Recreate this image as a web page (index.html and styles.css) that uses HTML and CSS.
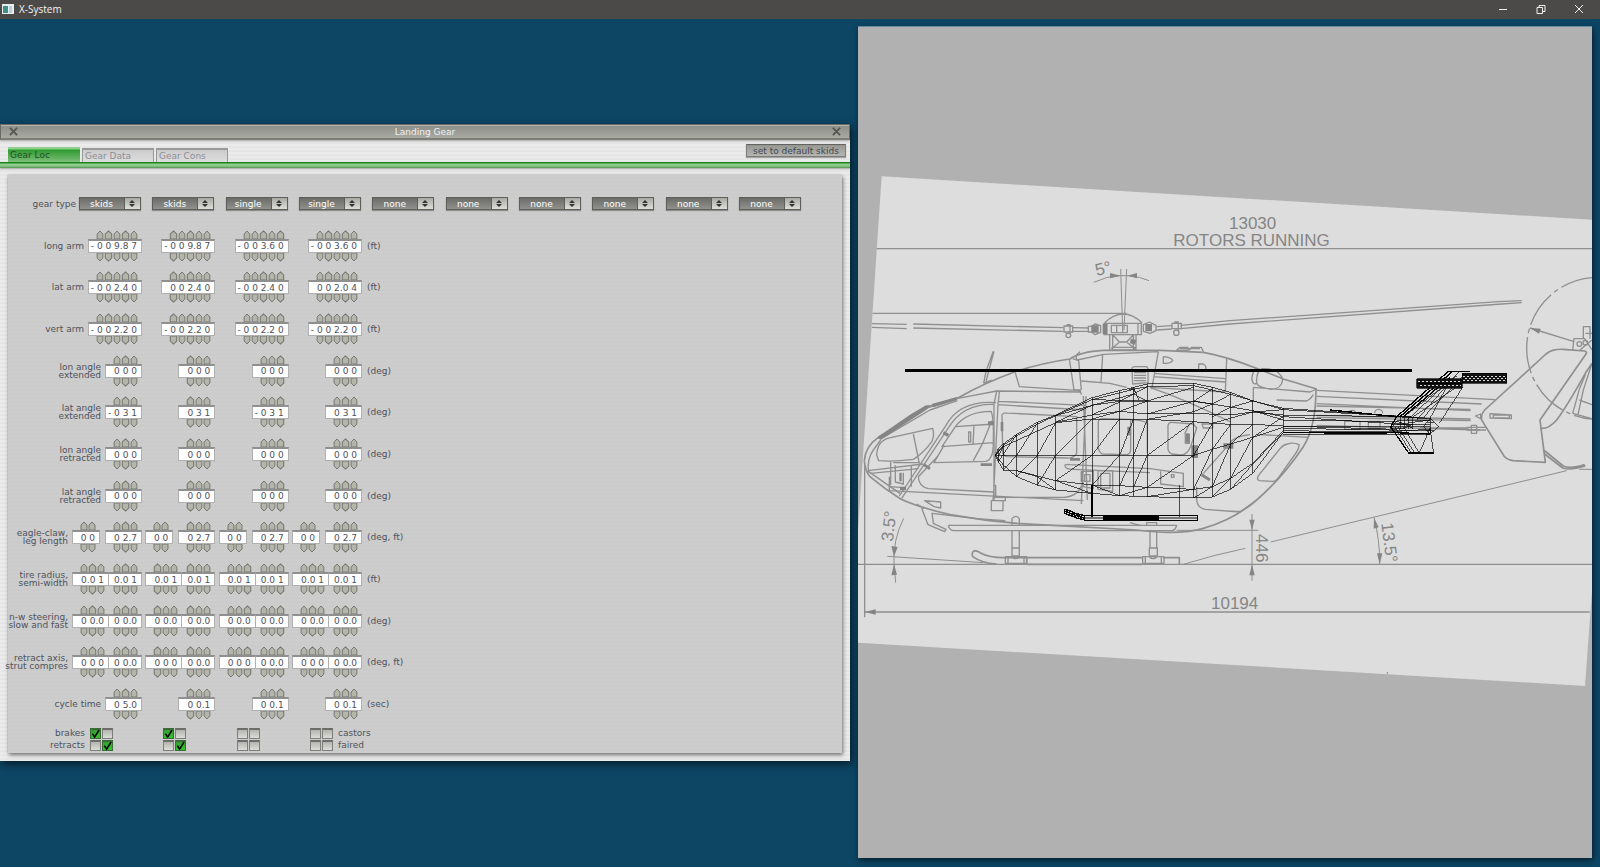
FILE: index.html
```html
<!DOCTYPE html>
<html lang="en">
<head>
    <meta charset="utf-8">
    <title>X-System</title>
    <link rel="stylesheet" href="styles.css">
</head>
<body>
    <header class="app-bar">
        <svg class="app-icon" viewBox="0 0 12 10"><rect width="12" height="10" fill="#e8eeee"/><rect x="1" y="2" width="5" height="7" fill="#3f8f86"/><rect x="7" y="2" width="3" height="7" fill="#b9cfd6"/></svg>
        <span class="app-name">X-System</span>
        <button class="app-btn" aria-label="Minimize"><svg viewBox="0 0 10 10"><path d="M1 5.5h8"/></svg></button>
        <button class="app-btn" aria-label="Restore"><svg viewBox="0 0 10 10"><path d="M1 3.5h5.5v6H1zM3 3.500V1.500h6v6H6.500"/></svg></button>
        <button class="app-btn" aria-label="Close"><svg viewBox="0 0 10 10"><path d="M1 1l8 8M9 1l-8 8"/></svg></button>
    </header>

    <main class="desktop">
        <section class="gear-window">
            <div class="window-title">
                <button class="window-close" aria-label="Close"><svg viewBox="0 0 10 10"><path d="M1 1l8 8M9 1l-8 8"/></svg></button>
                <h1>Landing Gear</h1>
                <button class="window-close" aria-label="Close"><svg viewBox="0 0 10 10"><path d="M1 1l8 8M9 1l-8 8"/></svg></button>
            </div>
            <div class="tab-bar">
                <button class="tab active">Gear Loc</button>
                <button class="tab">Gear Data</button>
                <button class="tab">Gear Cons</button>
                <button class="default-btn">set to default skids</button>
            </div>
            <div class="tab-line"></div>
            <form class="panel">
                <div class="row type-row" id="typeRow"></div>
                <div class="digit-rows" id="digitRows"></div>
                <div class="check-rows" id="checkRows"></div>
            </form>
        </section>

        <section class="view-window">
            <svg class="view" viewBox="24 -819 2202 2493" preserveAspectRatio="xMidYMid slice">
                <path d="M95 -371L2226 -241V873L2205 1158L24 1028V690z" fill="#dddddd"/>

                <!-- dimensions -->
                <g class="print">
                    <path d="M80 -154H2226M68 40H830M24 793H2226M44 500V952M44 936H2219"/>
                    <path class="thin" d="M812 -93L818 90M830 -93L822 90M731 -53Q770 -72 812 -73H835Q870 -70 897 -58"/>
                    <path class="thin" d="M112 769L400 788M161 655Q128 720 132 793L137 848M980 691H1225M1206 642V842M1000 793Q1090 765 1186 745M1262 726L2150 512M2188 508H2226M1572 653Q1590 720 1589 793M1612 1116V1122"/>
                    <path class="solid" d="M780 -81V-65L812 -73zM861 -81V-65L832 -73zM44 936L77 928V944zM124 738L143 741L132 770zM124 826L141 824L132 793zM1198 659H1214L1206 691zM1198 826H1214L1206 793zM1572 653L1586 682L1571 686zM1581 760H1597L1589 793z"/>
                    <circle cx="2243" cy="145" r="213" stroke-dasharray="110 12 14 12"/>
                    <path d="M2040 84L2170 124"/>
                    <path class="solid" d="M2040 84L2072 86L2067 101z"/>
                </g>
                <g class="print-text">
                    <text x="1137" y="-214">13030</text>
                    <text x="970" y="-162">ROTORS RUNNING</text>
                    <text x="1083" y="928">10194</text>
                    <text transform="translate(740 -72) rotate(-14)">5°</text>
                    <text transform="translate(128 726) rotate(-83)">3.5°</text>
                    <text transform="translate(1218 702) rotate(90)">446</text>
                    <text transform="translate(1594 670) rotate(83)">13.5°</text>
                </g>

                <!-- main rotor -->
                <g class="print">
                    <path d="M66 71L170 73M66 82L170 86M190 72L640 83M190 84L640 94M668 83L716 84M668 94L716 94M992 76L1140 62L1945 5L2015 2M992 86L1140 72L1955 12L2015 8M920 80L965 77M920 90L965 87"/>
                    <path d="M764 68Q820 16 876 68M715 79H725L735 72L752 77V97L735 104L725 96H715zM762 70H874V104H762zM880 74L898 66L918 76V92L900 100L880 94zM770 70V104M864 70V104M784 76H832V98H784zM800 76V98M818 76V98M779 104V150M788 104V150M850 104V150M858 104V150M790 106L808 126H830L848 106M792 140L806 128M848 140L832 128M786 142H854V150H786z"/>
                    <path d="M642 78H668V96H642zM650 74H660V100M966 70H994V86H966zM973 66H985V96"/>
                    <circle cx="655" cy="106" r="7"/><circle cx="979" cy="98" r="8"/>
                    <path class="solid" d="M724 76h22v22h-22zM886 72h20v22h-20zM758 72h14v30h-14zM842 116l18 4-6 14-14-4z"/>
                </g>

                <!-- fuselage outline -->
                <g class="print">
                    <path class="bold" d="M43 482C45 452 62 428 85 412L235 322L325 293Q400 250 495 215Q580 188 660 177Q690 155 760 151H930L1060 157Q1130 170 1215 203L1300 237L1400 267"/>
                    <path class="bold" d="M43 482Q45 512 60 530Q105 568 152 597Q200 620 300 644Q400 662 500 670L860 690Q990 706 1060 685Q1150 660 1220 600Q1300 530 1360 440Q1398 380 1398 267"/>
                    <path d="M85 415L118 398L240 318L320 296M100 412L240 330L322 302M92 420L70 450Q50 478 56 515L150 580"/>
                    <path class="solid" d="M82 412L180 344L228 316H242L228 330L130 394L92 420zM245 312L318 292L322 300L250 322z"/>
                    <path d="M320 296L440 273L690 276M495 215L508 260L690 272M658 177L672 270H690L694 284M668 176L686 182L694 270M694 243L780 250L830 262M690 155Q672 168 682 180L760 163L925 155M758 163L753 248M925 155L905 268M1130 176L1126 276L900 262M912 220L1126 236M910 230L1126 246M401 250L408 214L430 154M408 245L416 214L432 154M401 250L425 240"/>
                    <path d="M440 273L432 313M448 276L444 314M432 313Q340 310 296 382L155 595M438 308Q330 300 288 376L148 588M444 314L706 330M444 304L706 316M700 288L712 600M708 288L694 612M432 313V600M444 314L430 600"/>
                    <path d="M80 465Q82 420 122 413L248 385Q254 405 246 424Q220 460 190 478Q130 486 86 482zM190 402L208 490"/>
                    <path d="M276 440L316 380Q350 334 424 334Q432 360 430 428zM316 380L432 372M372 376L369 432M356 396H362V426H356zM425 362L398 430L370 482M282 436L252 488L408 484Q430 478 430 428"/>
                    <path class="solid" d="M282 394l16 8-6 8-14-8zM222 490l20 12-4 8-18-12zM414 364h18v12h-18zM392 490h34v8h-34z"/>
                    <path d="M456 344Q460 338 470 339L680 350V460Q670 476 650 474L470 470Q456 464 458 450zM62 520L205 506M54 512L220 492M122 486V556M130 488H210M136 496V546L160 552V518M184 494V560M118 560L150 562"/>
                    <path class="solid" d="M148 518h7v26h-7zM150 560h18v10h-18zM452 366h8v28h-8zM660 474h30v8h-30zM692 516h8v30h-8z"/>
                    <path d="M205 530Q206 560 236 566L430 576M205 530L262 470M118 530V572L700 602M430 600V592L640 592Q690 590 700 540M430 556H437V592H466V602H424V632H459V604M224 602L272 606V624L252 620zM694 514H730V566L700 560zM744 512H788V574L744 568zM752 520H780V564H752zM704 524H720V544H704z"/>
                    <path d="M745 364Q747 356 758 356L842 358V450Q842 464 826 464L756 462Q744 452 745 440zM842 358Q890 362 892 372V460M954 376Q956 366 966 367L1030 372L1040 384L1022 440Q1010 466 990 465L965 462Q952 456 954 440zM1004 402L1018 372M1006 402V430H1018V402M1056 372H1088V384H1060z"/>
                    <path class="solid" d="M1024 436h20v38h-20zM1120 430h30v16h-30zM1056 520l26 16-4 8-26-16zM832 380h10v26h-10zM1008 400h10v28h-10z"/>
                    <path d="M646 500Q640 492 660 494L900 506L1000 520V560L932 552V514M964 524H972V532H964zM646 500Q648 508 670 508L900 518M1060 520L1140 430Q1150 410 1200 404M1040 560V600Q1042 624 1066 628L1170 636L1210 608M900 262Q1010 300 1142 366"/>
                    <path d="M846 204Q848 200 856 200H890L894 206V248L848 252zM852 218H888M852 226H888M852 234H888M852 242H888M940 170Q966 172 968 182Q960 192 940 190zM1046 192H1060Q1068 196 1068 206L1058 214H1046zM980 151L990 142H1014V151zM1018 151L1024 142H1054L1060 155M990 146H1050"/>
                    <path d="M1216 205Q1204 226 1206 240Q1210 256 1220 250M1220 250Q1218 214 1236 206Q1290 204 1298 240Q1294 268 1262 268Q1224 262 1220 250M1210 262L1380 276L1400 267M1210 262V300M1280 300L1370 303Q1384 296 1390 284M1220 403L1376 412M1312 432Q1330 426 1347 434Q1348 444 1340 456L1286 532Q1278 544 1268 544L1228 542Q1218 538 1226 526L1290 446Q1300 434 1312 432M1140 634H1172"/>
                    <path d="M1400 271L1935 299M1400 289L1895 312M1400 311L1860 332V328L1400 318M1400 352L1860 362V357L1400 346M1400 376L1890 390M1484 364H1530V388H1484zM1555 364H1590V386H1555zM1710 384H1856"/>
                    <path d="M1495 340A12 12 0 0 1 1518 340M1574 340A12 12 0 0 1 1598 340M1850 382H1908M1850 390H1908M1864 376V400H1880V376zM1876 348L1892 342V356z"/>
                </g>

                <!-- tail fin -->
                <g class="print">
                    <path class="bold" d="M2108 151Q2125 147 2140 148L2204 153Q2212 156 2208 162L2070 360L2086 487L1990 482Q1972 480 1962 468L1896 362Q1890 345 1904 330L2088 162Q2098 154 2108 151"/>
                    <path class="bold" d="M2226 190L2206 220Q2150 320 2120 360Q2096 388 2070 385M2081 450L2140 498Q2160 508 2204 494M2084 462L2138 504Q2160 512 2206 498"/>
                    <path d="M1920 341L1984 345V356L1920 354zM1930 345H1978V354H1930zM2168 340L2188 268L2206 224M2184 344L2200 270L2226 190M2188 300L2226 314M2168 340L2226 356M2168 150L2172 116H2204L2226 150M2200 116V80H2220V116M2206 100H2226M2190 150L2226 120"/>
                    <circle cx="2188" cy="132" r="7"/><circle cx="2206" cy="128" r="7"/>
                </g>

                <!-- landing skids -->
                <g class="print">
                    <path d="M215 625L234 674L284 695L288 688L250 670L246 638M200 612L222 626M246 640L380 656L466 662M295 678Q298 674 306 676H980Q976 692 964 692H312Q300 692 295 678M486 676V656Q498 642 508 656V676M486 692V744M508 692V744M900 692V744M920 692V744M890 676V668H920V676"/>
                    <path class="bold" d="M372 752Q364 758 368 770Q396 790 440 792M372 752Q382 752 390 758Q420 774 466 773H876M530 773V793M940 773H988V793M530 793H876"/>
                    <path d="M486 744H508V768H486zM466 770H530V790H466zM474 770V790M522 770V790M898 744H922V768H898zM878 770H942V790H878zM886 770V790M934 770V790M484 768Q496 784 510 768M896 768Q908 784 924 768M840 668L870 676"/>
                </g>

                <!-- wireframe model -->
                <g class="wire">
                    <path class="rotor" d="M165 211H1687"/>
                    <path d="M436 466L445 446L460 432L500 403L562 367L617 345L726 293L809 272L851 262L892 252L1031 250L1087 262L1142 277L1208 303L1300 325"/>
                    <path d="M436 466L460 436L500 408L562 372L617 347L726 299L851 268L892 260L1031 257L1142 283L1300 329"/>
                    <path d="M436 466L460 495L500 530L562 555L617 570L726 580L809 587L892 590L1031 594L1087 591L1142 568L1208 520L1300 397"/>
                    <path d="M436 466L445 485L460 510L500 512L617 542L726 555L809 557L892 562L1031 568L1087 560L1142 535L1208 490L1300 392"/>
                    <path d="M436 466H1031L1087 448L1142 432L1208 412L1300 382"/>
                    <path d="M436 466L460 440L617 368L726 357L892 358L1031 365L1087 370L1142 373H1208L1300 378"/>
                    <path d="M617 347L726 316L809 304H1031L1142 321L1208 332L1300 350M617 367L726 345L809 334L892 342L1031 340L1142 345L1208 336L1300 345"/>
                    <path d="M445 446V485M460 432V510M500 403V530M562 367V555M617 345V570M726 293V580M809 272V587M851 262V588M892 252V590M1031 250V594M1087 262V591M1142 277V568M1208 303V520M1300 325V400"/>
                    <path d="M445 485L500 403M445 470L460 440M460 510L500 466L562 370M500 530L562 466L617 368M562 555L617 466L726 357M617 542L726 466L809 356M726 555L809 466L851 356M809 557L851 466L892 358M851 560L892 466L1031 365M892 562L1031 466L1087 370M1031 568L1087 448L1142 373M1087 560L1142 432L1208 373M1142 535L1208 412L1300 350M1031 594L1087 560M1087 591L1142 535M1142 568L1208 493L1300 397"/>
                    <path d="M500 512L562 530L617 570M617 542L726 580M726 555L809 587M809 587L892 562M892 590L1031 568M726 299L892 303L1031 262M726 316L851 282L892 304M809 304L892 260M851 262L866 300M892 342L1031 304L1087 267M892 358L1031 335L1087 312M809 334L892 303M726 357L809 334M617 367L726 316M726 345L809 306M1031 303L1087 312L1142 283M1087 350L1142 322L1208 303M1087 370L1208 336L1300 329M1208 332L1300 360M843 266L855 276M838 270L850 264"/>
                    <path d="M1300 325L1740 355L1766 380L1740 402H1300M1300 329L1700 352M1300 345L1640 350M1300 350L1650 372L1740 360M1300 360L1640 365M1300 378H1740M1300 385L1740 392M1300 392L1600 396L1740 388M1300 378L1640 388M1740 355V402M1740 355L1720 380L1740 402M1730 366H1752M1730 392H1752"/>
                    <path class="heavy" d="M1300 397H1610L1740 402M1422 400H1610M1440 330L1640 350"/>
                    <path class="heavy" d="M1622 380L1640 350L1795 214H1860M1650 350L1808 214M1660 350L1800 232M1622 380L1676 459H1751"/>
                    <path d="M1662 350L1820 228M1672 360L1790 250M1634 380L1684 459M1644 380L1694 459M1660 380L1708 459M1708 459L1740 385L1751 459M1690 350L1836 250M1700 360L1826 216M1720 352L1836 232M1740 355L1795 250M1768 370L1838 262M1640 350L1730 356M1640 362H1740M1640 374H1740M1650 350V386M1662 350V386M1674 350V386M1686 350V386M1622 372H1690L1660 386H1622L1640 362L1690 386"/>
                    <path class="block" d="M1700 236H1836V264H1700zM1837 219H1970V249H1837z"/>
                    <path class="speck" d="M1704 244H1834M1838 228H1968M1838 242H1968"/>
                    <path class="speck late" d="M1704 257H1832M1838 235H1968"/>
                    <path class="heavy" d="M1700 250H1836"/>
                    <path class="leg" d="M725 555V652"/>
                    <path d="M988 555V652"/>
                    <path class="skid" d="M758 654H926"/>
                    <path class="heavy" d="M703 647H1042V661H703z"/>
                    <path class="tube" d="M926 654H1040M706 654H758"/>
                    <path class="heavy" d="M643 628L660 632L676 640L703 647M643 640L660 646L680 654L703 660M643 628V640M652 630L650 643M660 632L658 646M670 636L668 650M680 642L676 652M688 644L684 656M694 646V658M643 634L703 655"/>
                </g>
            </svg>
        </section>
    </main>

    <script src="script.js"></script>
</body>
</html>
```
FILE: styles.css
```css
* {
    box-sizing: border-box;
}
body {
    margin: 0;
    min-height: 100vh;
    display: flex;
    flex-direction: column;
    background-color: #0d4564;
    font-family: "DejaVu Sans", sans-serif;
    font-size: 9px;
    color: #4e525c;
}
button, input, select {
    margin: 0;
    padding: 0;
    border: none;
    border-radius: 0;
    font: inherit;
    color: inherit;
}

/* application bar */
.app-bar {
    display: flex;
    align-items: center;
    height: 19px;
    padding: 0 2px 1px;
    background-color: #4b4a48;
    color: #f4f4f4;
}
.app-icon {
    width: 12px;
    height: 10px;
}
.app-name {
    flex: 1;
    margin-left: 5px;
    font-family: "Open Sans", sans-serif;
    font-size: 10px;
}
.app-btn {
    width: 38px;
    height: 18px;
    background: none;
}
.app-btn svg {
    display: block;
    width: 10px;
    height: 10px;
    margin: 0 auto;
    fill: none;
    stroke: #f0f0f0;
}

.desktop {
    flex: 1;
    display: grid;
    grid-template-columns: 850fr 734fr;
    gap: 8px;
    padding: 8px 8px 9px 0;
    align-items: start;
}

/* landing gear window */
.gear-window {
    margin-top: 97px;
    padding-bottom: 8px;
    background: repeating-linear-gradient(#ebebeb 0, #ebebeb 2px, #e3e3e3 3px, #e7e7e7 4px);
    box-shadow: 2px 3px 8px rgba(0, 0, 0, 0.6);
}
.window-title {
    display: flex;
    align-items: center;
    justify-content: space-between;
    height: 16px;
    padding: 0 8px;
    background: linear-gradient(#8b8c85, #a9aaa3);
    border: 1px solid #6a6b66;
    border-bottom: 2px solid #7c7d77;
    box-shadow: inset 0 1px #b4b5af, 0 1px 2px rgba(0, 0, 0, 0.3);
}
.window-title h1 {
    margin: 0;
    font-size: 9px;
    font-weight: normal;
    color: #f2f2f2;
}
.window-close {
    width: 9px;
    height: 9px;
    background: none;
}
.window-close svg {
    display: block;
    width: 9px;
    height: 9px;
    stroke: #55564f;
    stroke-width: 2;
}
.tab-bar {
    display: flex;
    align-items: flex-end;
    gap: 2px;
    height: 22px;
    padding: 0 4px 0 8px;
}
.tab {
    width: 72px;
    height: 14px;
    padding-left: 2px;
    text-align: left;
    color: #8b8e96;
    background: linear-gradient(#cccccc, #dedede);
    border: 1px solid #999a98;
    border-width: 2px 1px 0;
}
.tab.active {
    height: 15px;
    color: #1f4d2a;
    background: linear-gradient(#8fd08c 0, #8fd08c 2px, #2f9a2e 3px, #7dbf7a);
    border: none;
}
.default-btn {
    width: 100px;
    height: 13px;
    margin: 0 0 5px auto;
    background: linear-gradient(#969791, #b5b6b1);
    border: 1px solid #7c7d78;
    border-top-color: #62635e;
    box-shadow: 0 1px 1px rgba(0, 0, 0, 0.3);
    color: #434854;
    white-space: nowrap;
}
.tab-line {
    height: 6px;
    background: linear-gradient(#1c841c 0, #1c841c 1px, #93cf90 2px, #8cc789 4px, #4f944e 6px);
    box-shadow: 0 1px 2px rgba(0, 0, 0, 0.3);
}
.panel {
    margin: 7px 8px 0;
    padding: 22px 40px 2px 0;
    background: repeating-linear-gradient(#cdcdcd 0, #cdcdcd 2px, #cacaca 3px, #cccccc 4px);
    box-shadow: 0 0 1px #888888, 1px 2px 4px rgba(0, 0, 0, 0.5);
}

/* every row shares the ten gear columns */
.row {
    display: grid;
    grid-template-columns: 134px repeat(9, minmax(0, 1fr));
    align-items: center;
}
.cell {
    display: flex;
    align-items: center;
    justify-content: flex-end;
}
.row-label {
    flex: none;
    margin-right: 4px;
    line-height: 8px;
    text-align: right;
    white-space: pre;
}
.unit {
    padding-left: 5px;
    white-space: nowrap;
}
.type-row {
    margin-bottom: 15px;
}
.type-row .cell {
    padding-right: 1px;
}
.type-row .row-label {
    margin-right: 3px;
}
.gear-type {
    flex: none;
    width: 62px;
    height: 13px;
    padding-right: 17px;
    appearance: none;
    color: #ffffff;
    text-align: center;
    text-align-last: center;
    border: 1px solid #5e5f5b;
    background:
        url("data:image/svg+xml,%3Csvg xmlns='http://www.w3.org/2000/svg' width='16' height='11'%3E%3Cpath d='M8 2l3 3H5zM8 9L5 6h6z' fill='%23333'/%3E%3C/svg%3E") right center no-repeat,
        linear-gradient(90deg, #5e5f5b 0, #5e5f5b 1px, transparent 1px) right / 16px 100% no-repeat,
        linear-gradient(#a9aaa3, #deded8) right / 16px 100% no-repeat,
        linear-gradient(#6b6c68, #90918c);
    box-shadow: 0 1px 1px rgba(0, 0, 0, 0.3);
}

/* digit steppers */
.digit-rows {
    display: grid;
    grid-template-rows: repeat(12, 1fr);
    height: 500px;
}
.stepper {
    flex: none;
    position: relative;
}
.digits-5 {
    width: 54px;
}
.digits-3 {
    width: 37px;
}
.digits-2 {
    width: 28px;
    margin-right: 5px;
}
.digits-3.lead {
    margin-right: -4px;
    z-index: 1;
}
.arrows {
    display: flex;
    height: 9px;
    padding: 0 4px 0 8px;
}
.arrows button {
    flex: 1;
    min-width: 0;
    background: url("data:image/svg+xml,%3Csvg xmlns='http://www.w3.org/2000/svg' viewBox='0 0 8 9'%3E%3Cpath d='M1 9V4L4 1l3 3v5z' fill='%23b4b5ab' stroke='%2376776f'/%3E%3C/svg%3E") center / 100% 100% no-repeat;
}
.arrows.down button {
    transform: scaleY(-1);
}
.stepper input {
    display: block;
    width: 100%;
    height: 14px;
    padding-right: 4px;
    text-align: right;
    background-color: #ffffff;
    border: 1px solid #b0b0b0;
    border-top: 2px solid #8f8f8f;
}

/* check boxes */
.check-rows {
    display: grid;
    padding-top: 2px;
}
.check-row {
    height: 12px;
}
.check-row .row-label {
    margin-right: 5px;
}
.checks {
    flex: none;
    display: flex;
    align-items: center;
    gap: 1px;
    width: 52px;
}
.checks input {
    flex: none;
    width: 11px;
    height: 11px;
    appearance: none;
    border: 1px solid #7d7e79;
    border-top: 2px solid #6c6d68;
    background: linear-gradient(#b4b5ae, #dcdcd8);
}
.checks input:checked {
    border-color: #3c6b3a;
    background: url("data:image/svg+xml,%3Csvg xmlns='http://www.w3.org/2000/svg' viewBox='0 0 9 9'%3E%3Cpath d='M1 4l2.500 4L8.500 0' fill='none' stroke='%23000' stroke-width='1.700'/%3E%3C/svg%3E") center / 100% 100% no-repeat, linear-gradient(#3a9d36, #2fc42a);
}
.after {
    margin-left: 4px;
}

/* model view */
.view-window {
    align-self: stretch;
    background-color: #b1b1b1;
    box-shadow: 0 -1px #64889c, 1px 2px 6px rgba(0, 0, 0, 0.6);
}
.view {
    display: block;
    width: 100%;
    height: 100%;
}
.print {
    fill: none;
    stroke: #8f8f8f;
    stroke-width: 4;
    stroke-linejoin: round;
}
.print .thin {
    stroke-width: 3;
}
.print .bold {
    stroke-width: 5;
}
.print .solid {
    fill: #858585;
    stroke: none;
}
.print-text {
    font-family: "Liberation Sans", Arial, sans-serif;
    font-size: 51px;
    fill: #858585;
}
.wire {
    fill: none;
    stroke: #000000;
    stroke-width: 2;
    shape-rendering: crispEdges;
}
.wire .rotor {
    stroke-width: 7;
}
.wire .heavy {
    stroke-width: 4;
}
.wire .leg {
    stroke-width: 6;
}
.wire .skid {
    stroke-width: 14;
}
.wire .tube {
    stroke: #777777;
    stroke-width: 6;
}
.wire .block {
    fill: #111111;
}
.wire .speck {
    stroke: #dddddd;
    stroke-width: 3;
    stroke-dasharray: 6 6;
}
.wire .late {
    stroke-dashoffset: 6;
}
```
FILE: script.js
```js
const gearTypes = ['skids', 'skids', 'single', 'single', 'none', 'none', 'none', 'none', 'none', 'none'];

const rows = [
    { label: 'long arm', unit: '(ft)', values: [['- 0 0 9.8 7'], ['- 0 0 9.8 7'], ['- 0 0 3.6 0'], ['- 0 0 3.6 0']] },
    { label: 'lat arm', unit: '(ft)', values: [['- 0 0 2.4 0'], ['0 0 2.4 0'], ['- 0 0 2.4 0'], ['0 0 2.0 4']] },
    { label: 'vert arm', unit: '(ft)', values: [['- 0 0 2.2 0'], ['- 0 0 2.2 0'], ['- 0 0 2.2 0'], ['- 0 0 2.2 0']] },
    { label: 'lon angle\nextended', unit: '(deg)', values: [['0 0 0'], ['0 0 0'], ['0 0 0'], ['0 0 0']] },
    { label: 'lat angle\nextended', unit: '(deg)', values: [['- 0 3 1'], ['0 3 1'], ['- 0 3 1'], ['0 3 1']] },
    { label: 'lon angle\nretracted', unit: '(deg)', values: [['0 0 0'], ['0 0 0'], ['0 0 0'], ['0 0 0']] },
    { label: 'lat angle\nretracted', unit: '(deg)', values: [['0 0 0'], ['0 0 0'], ['0 0 0'], ['0 0 0']] },
    { label: 'eagle-claw,\nleg length', unit: '(deg, ft)', values: Array(4).fill(['0 0', '0 2.7']) },
    { label: 'tire radius,\nsemi-width', unit: '(ft)', values: Array(4).fill(['0.0 1', '0.0 1']) },
    { label: 'n-w steering,\nslow and fast', unit: '(deg)', values: Array(4).fill(['0 0.0', '0 0.0']) },
    { label: 'retract axis,\nstrut compres', unit: '(deg, ft)', values: Array(4).fill(['0 0 0', '0 0.0']) },
    { label: 'cycle time', unit: '(sec)', values: [['0 5.0'], ['0 0.1'], ['0 0.1'], ['0 0.1']] }
];

const checkRows = [
    { label: 'brakes', after: 'castors', values: [[1, 0], [1, 0], [0, 0], [0, 0]] },
    { label: 'retracts', after: 'faired', values: [[0, 1], [0, 1], [0, 0], [0, 0]] }
];

function arrows(count, dir) {
    const button = `<button type="button" aria-label="${dir}"></button>`;
    return `<div class="arrows ${dir}">${button.repeat(count)}</div>`;
}

function stepper(value, id, name, lead) {
    const count = value.replace(/\D/g, '').length;
    return `<div class="stepper digits-${count} ${lead ? 'lead' : ''}">
        ${arrows(count, 'up')}
        <input type="text" id="${id}" aria-label="${name}" value="${value}">
        ${arrows(count, 'down')}
    </div>`;
}

document.getElementById('typeRow').innerHTML = gearTypes.map((type, i) => {
    const label = i === 0 ? '<label class="row-label" for="type0">gear type</label>' : '';
    const options = ['none', 'skids', 'single'].map(t => `<option ${t === type ? 'selected' : ''}>${t}</option>`).join('');
    return `<div class="cell">${label}<select class="gear-type" id="type${i}" aria-label="gear type">${options}</select></div>`;
}).join('');

document.getElementById('digitRows').innerHTML = rows.map((row, r) => {
    const cells = row.values.map((values, c) => {
        const label = c === 0 ? `<label class="row-label" for="v${r}-0-0">${row.label}</label>` : '';
        const steppers = values.map((v, i) => stepper(v, `v${r}-${c}-${i}`, row.label, values.length > 1 && i === 0)).join('');
        return `<div class="cell">${label}${steppers}</div>`;
    }).join('');
    return `<div class="row">${cells}<span class="unit">${row.unit}</span></div>`;
}).join('');

document.getElementById('checkRows').innerHTML = checkRows.map((row, r) => {
    const cells = row.values.map((values, c) => {
        const label = c === 0 ? `<label class="row-label" for="c${r}-0-0">${row.label}</label>` : '';
        const boxes = values.map((on, i) => `<input type="checkbox" id="c${r}-${c}-${i}" aria-label="${i ? row.after : row.label}" ${on ? 'checked' : ''}>`).join('');
        const after = c === 3 ? `<label class="after" for="c${r}-3-1">${row.after}</label>` : '';
        return `<div class="cell">${label}<div class="checks">${boxes}${after}</div></div>`;
    }).join('');
    return `<div class="row check-row">${cells}</div>`;
}).join('');
```
